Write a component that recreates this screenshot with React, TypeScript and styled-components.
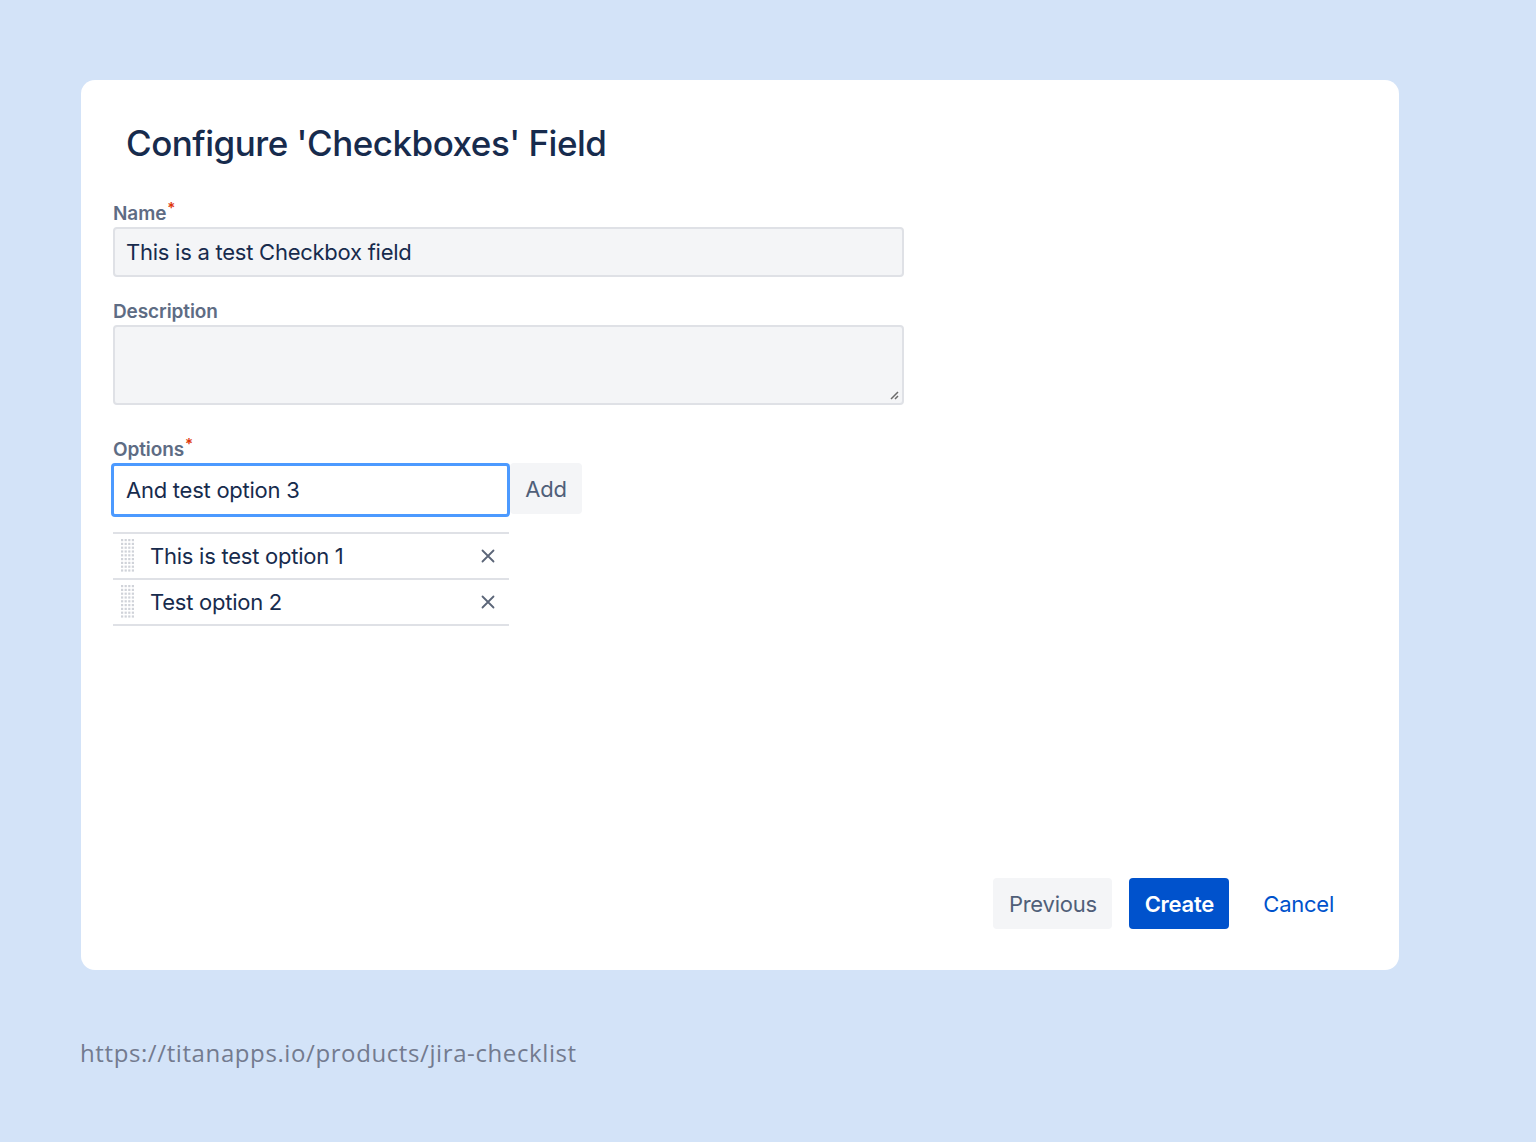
import styled, { createGlobalStyle } from "styled-components";

const GlobalStyle = createGlobalStyle`
  html, body {
    margin: 0;
    padding: 0;
    background: #d3e3f8;
  }
  body {
    font-family: Inter, "Noto Sans", sans-serif;
  }
  * {
    box-sizing: border-box;
  }
`;

const Page = styled.div`
  width: 1536px;
  height: 1142px;
  padding: 80px 0 0 81px;
  display: flex;
  flex-direction: column;
`;

const Card = styled.div`
  width: 1318px;
  height: 890px;
  background: #fff;
  border-radius: 14px;
  padding: 40px 32px 41px 32px;
  display: flex;
  flex-direction: column;
`;

const Title = styled.h1`
  margin: 0 0 0 13px;
  font-size: 35px;
  line-height: 46px;
  font-weight: 500;
  letter-spacing: -0.5px;
  color: #172b4d;
`;

const Field = styled.div<{ $top: number }>`
  margin-top: ${(p) => p.$top}px;
  display: flex;
  flex-direction: column;
`;

const Label = styled.label`
  font-size: 19px;
  line-height: 22px;
  font-weight: 600;
  color: #5e6c84;
  margin-bottom: 2px;
  letter-spacing: -0.1px;
`;

const Star = styled.span`
  color: #de350b;
  font-size: 15px;
  vertical-align: top;
  position: relative;
  top: -6px;
  margin-left: 1px;
`;

const TextBox = styled.div<{ $height: number }>`
  position: relative;
  width: 791px;
  height: ${(p) => p.$height}px;
  background: #f4f5f7;
  border: 2px solid #dfe1e6;
  border-radius: 4px;
  padding: 0 11px;
  display: flex;
  align-items: center;
  font-size: 22px;
  color: #172b4d;
  letter-spacing: -0.25px;
`;

const Grip = styled.svg`
  position: absolute;
  right: 2px;
  bottom: 2px;
`;

const AddRow = styled.div`
  display: flex;
  align-items: flex-start;
  margin-left: -2px;
`;

const FocusInput = styled.div`
  width: 399px;
  height: 54px;
  border: 3px solid #4c9aff;
  border-radius: 4px;
  background: #fff;
  padding: 0 12px;
  display: flex;
  align-items: center;
  font-size: 22px;
  color: #172b4d;
  letter-spacing: -0.25px;
`;

const SubtleButton = styled.button<{ $w: number }>`
  width: ${(p) => p.$w}px;
  height: 51px;
  border: none;
  border-radius: 4px;
  background: #f4f5f7;
  color: #505f79;
  font-family: inherit;
  font-size: 22px;
  letter-spacing: -0.25px;
`;

const OptionList = styled.div`
  margin-top: 15px;
  width: 396px;
  border-top: 2px solid #dfe1e6;
`;

const OptionRow = styled.div`
  height: 46px;
  border-bottom: 2px solid #dfe1e6;
  display: flex;
  align-items: center;
  padding: 0 14px 0 8px;
  font-size: 22px;
  color: #172b4d;
  letter-spacing: -0.25px;
`;

const OptionText = styled.span`
  flex: 1;
  margin-left: 15px;
`;

const Footer = styled.div`
  margin-top: auto;
  display: flex;
  justify-content: flex-end;
  align-items: center;
  gap: 17px;
  padding-right: 33px;
`;

const PrimaryButton = styled.button`
  width: 100px;
  height: 51px;
  border: none;
  border-radius: 4px;
  background: #0052cc;
  color: #fff;
  font-family: inherit;
  font-size: 22px;
  font-weight: 600;
  letter-spacing: -0.25px;
`;

const LinkButton = styled.button`
  height: 51px;
  padding: 0 0 0 17px;
  border: none;
  background: transparent;
  color: #0052cc;
  font-family: inherit;
  font-size: 22px;
  letter-spacing: -0.25px;
`;

const SourceUrl = styled.div`
  margin-top: 66px;
  margin-left: -1px;
  font-family: "Open Sans", sans-serif;
  font-size: 24px;
  color: #737b8f;
  letter-spacing: 0.6px;
`;

function DragHandle() {
  const dots = [];
  for (let r = 0; r < 9; r++) {
    for (let c = 0; c < 4; c++) {
      dots.push(<rect key={`${r}-${c}`} x={c * 3.6} y={r * 3.8} width={2.2} height={2.2} fill="#d0d3d9" />);
    }
  }
  return (
    <svg width="14" height="34" viewBox="0 0 14 34">
      {dots}
    </svg>
  );
}

function Cross() {
  return (
    <svg width="14" height="14" viewBox="0 0 14 14">
      <path d="M1.5 1.5 L12.5 12.5 M12.5 1.5 L1.5 12.5" stroke="#5b6578" strokeWidth="1.8" strokeLinecap="round" />
    </svg>
  );
}

const options = ["This is test option 1", "Test option 2"];

export default function App() {
  return (
    <>
      <GlobalStyle />
      <Page>
        <Card>
          <Title>Configure 'Checkboxes' Field</Title>
          <Field $top={37}>
            <Label>
              Name<Star>*</Star>
            </Label>
            <TextBox $height={50}>This is a test Checkbox field</TextBox>
          </Field>
          <Field $top={24}>
            <Label>Description</Label>
            <TextBox $height={80}>
              <Grip width="12" height="12" viewBox="0 0 12 12">
                <path d="M3 10 L10 3 M7 10 L10 7" stroke="#6b6b6b" strokeWidth="1.5" />
              </Grip>
            </TextBox>
          </Field>
          <Field $top={34}>
            <Label>
              Options<Star>*</Star>
            </Label>
            <AddRow>
              <FocusInput>And test option 3</FocusInput>
              <SubtleButton $w={72}>Add</SubtleButton>
            </AddRow>
            <OptionList>
              {options.map((o) => (
                <OptionRow key={o}>
                  <DragHandle />
                  <OptionText>{o}</OptionText>
                  <Cross />
                </OptionRow>
              ))}
            </OptionList>
          </Field>
          <Footer>
            <SubtleButton $w={119}>Previous</SubtleButton>
            <PrimaryButton>Create</PrimaryButton>
            <LinkButton>Cancel</LinkButton>
          </Footer>
        </Card>
        <SourceUrl>https://titanapps.io/products/jira-checklist</SourceUrl>
      </Page>
    </>
  );
}
